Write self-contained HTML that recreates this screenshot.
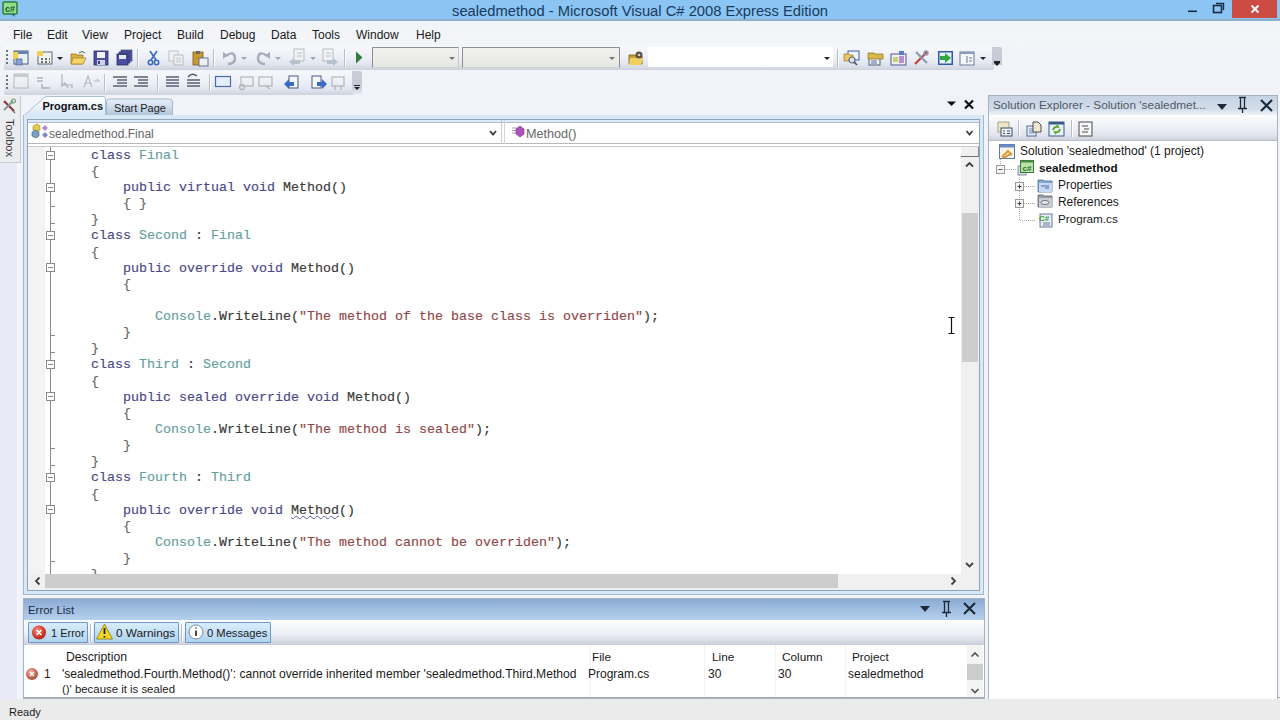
<!DOCTYPE html>
<html><head><meta charset="utf-8">
<style>
*{margin:0;padding:0;box-sizing:border-box}
html,body{width:1280px;height:720px;overflow:hidden;background:#F1F3F8;font-family:"Liberation Sans",sans-serif;position:relative}
.a{position:absolute}
.tx{position:absolute;white-space:nowrap;line-height:14px}
svg{position:absolute;overflow:visible}
#title{left:0;top:0;width:1280px;height:19px;background:#8AC5F3}
#titleline{left:0;top:19px;width:1280px;height:2px;background:#8FAECA}
#menubar{left:0;top:21px;width:1280px;height:25px;background:linear-gradient(#EEF5FC,#F3F4F8 6px,#F3F5F9)}
.menu{top:27.5px;font-size:12px;color:#1a1a1a}
.tb{background:linear-gradient(#F6F8FC,#EDF0F7 45%,#E2E6EF 75%,#CDD2DE);border-radius:2px}
.sep{position:absolute;width:1px;background:#B8BDCA;box-shadow:1px 0 0 #fff}
.dd{position:absolute;width:0;height:0;border-left:3px solid transparent;border-right:3px solid transparent;border-top:3px solid #222}
.grip{position:absolute;width:2px;background:repeating-linear-gradient(#6D7585 0 2px,transparent 2px 4px)}
#toolbox{left:0;top:96px;width:21px;height:67px;background:#ECEDF1;border-right:1px solid #C4C9D4;border-bottom:1px solid #C4C9D4}
#docframe{left:23px;top:115px;width:961px;height:480px;background:#D8E8F5;border:1px solid #A2B9CE}
#docinner{left:27px;top:119px;width:953px;height:472px;background:#fff;border:1px solid #8FA5B9}
#nav{left:28px;top:120px;width:951px;height:24px;background:linear-gradient(#DCEBF7 2px,#B4BCC6 2px,#B4BCC6 3px,#fff 3px);border-bottom:1px solid #B8B8B8}
#navline{left:28px;top:146px;width:951px;height:1px;background:#C8C8C8}
#code{left:28px;top:147px;width:933px;height:427px;background:#fff;overflow:hidden}
#vscroll{left:961px;top:147px;width:18px;height:427px;background:#F0F0F0}
#vthumb{left:962px;top:213px;width:16px;height:149px;background:#CDCDCD}
#hscroll{left:28px;top:574px;width:951px;height:16px;background:#F0F0F0}
#hthumb{left:45px;top:574px;width:793px;height:14px;background:#CDCDCD}
#errframe{left:23px;top:598px;width:962px;height:101px;background:#fff;border:1px solid #A7B3C2}
#errtitle{left:24px;top:599px;width:960px;height:21px;background:linear-gradient(#8BABD3,#A5C2E4 60%,#B5D0EC)}
#errtb{left:24px;top:620px;width:960px;height:25px;background:linear-gradient(#FCFDFE,#EEF0F6 55%,#DCDFE9 80%,#C8CDD9)}
#errlist{left:24px;top:645px;width:960px;height:53px;background:#fff;border-bottom:1px solid #A0A0A0}
#se{left:988px;top:95px;width:290px;height:604px;background:#fff;border:1px solid #A7B3C2;border-bottom:none}
#setitle{left:989px;top:96px;width:288px;height:19px;background:linear-gradient(#C6D3E3,#D2DDEA 70%,#E2E9F2 85%,#F0F3F8)}
#setb{left:989px;top:115px;width:288px;height:26px;background:linear-gradient(#FCFDFE,#F0F1F7 45%,#E3E5EE 80%,#CDD1DC);border-bottom:1px solid #B9BEC9}
#status{left:0;top:699px;width:1280px;height:21px;background:#EBEBEB}
#gut{position:absolute;left:0;top:0;width:17px;height:428px;background:#F3F3F3}
#oline{position:absolute;left:22px;top:0;width:1px;height:428px;background:#8A8A8A}
.ob{position:absolute;left:18px;width:9px;height:9px;border:1px solid #8A8A8A;background:#fff}
.ob:after{content:"";position:absolute;left:1px;top:3px;width:5px;height:1px;background:#8A8A8A}
.ot{position:absolute;left:22px;width:5px;height:1px;background:#8A8A8A}
.u{text-decoration:underline wavy #5A5A9A;text-decoration-thickness:1px;text-underline-offset:1px}
.ln{position:absolute;left:31px;font-family:"Liberation Mono",monospace;font-size:13.33px;white-space:pre;color:#383838;line-height:16px;-webkit-text-stroke:0.15px currentColor}
.b{color:#666}
.k{color:#48488A}.t{color:#64A0A0}.s{color:#904848}
</style></head><body>
<!-- title bar -->
<div class="a" id="title"></div>
<div class="a" id="titleline"></div>
<div class="tx" style="left:452px;top:3px;font-size:14.75px;line-height:16px;color:#1B3A5C">sealedmethod - Microsoft Visual C# 2008 Express Edition</div>
<div class="a" style="left:1232px;top:0;width:45px;height:18px;background:#CC4B43"></div>
<svg style="left:0;top:0" width="1280" height="21">
 <rect x="3" y="2" width="14" height="12" rx="1" fill="#8FE08A" stroke="#2E7D3A" stroke-width="1.5"/>
 <path d="M14 14 L15 17 L11 14Z" fill="#2B5A9A"/>
 <text x="5" y="12" font-family="Liberation Sans" font-weight="bold" font-size="9" fill="#1E5028">c#</text>
 <rect x="1188" y="10.5" width="9" height="1.6" fill="#1A2B44"/>
 <rect x="1213.5" y="5.5" width="8" height="7" fill="none" stroke="#1A2B44" stroke-width="1.6"/>
 <path d="M1216 3.5 H1223.5 V10" fill="none" stroke="#1A2B44" stroke-width="1.4"/>
 <path d="M1251.5 5.5 L1258.5 12.5 M1258.5 5.5 L1251.5 12.5" stroke="#fff" stroke-width="1.8"/>
</svg>
<!-- menu -->
<div class="a" id="menubar"></div>
<div class="tx menu" style="left:13px">File</div>
<div class="tx menu" style="left:47px">Edit</div>
<div class="tx menu" style="left:82px">View</div>
<div class="tx menu" style="left:124px">Project</div>
<div class="tx menu" style="left:177px">Build</div>
<div class="tx menu" style="left:220px">Debug</div>
<div class="tx menu" style="left:271px">Data</div>
<div class="tx menu" style="left:312px">Tools</div>
<div class="tx menu" style="left:356px">Window</div>
<div class="tx menu" style="left:416px">Help</div>
<!-- TOOLBARS -->
<div class="a tb" style="left:4px;top:46px;width:990px;height:24px"></div>
<div class="a tb" style="left:4px;top:71px;width:350px;height:24px"></div>
<div class="a" style="left:992px;top:47px;width:10px;height:18px;background:linear-gradient(#CACEDA,#C4C8D5);border-radius:0 2px 0 0"></div>
<div class="a" style="left:352px;top:71px;width:10px;height:23px;background:linear-gradient(#C9CDD9,#C6CAD6 60%,#E2E4EE);border-radius:0 2px 2px 0"></div>
<div id="icons">
<div class="grip" style="left:6px;top:50px;height:14px"></div>
<div class="grip" style="left:6px;top:75px;height:14px"></div>
<div class="sep" style="left:137px;top:49px;height:18px"></div>
<div class="sep" style="left:213px;top:49px;height:18px"></div>
<div class="sep" style="left:344px;top:49px;height:18px"></div>
<div class="sep" style="left:837px;top:49px;height:18px"></div>
<div class="sep" style="left:104px;top:74px;height:17px"></div>
<div class="sep" style="left:157px;top:74px;height:17px"></div>
<div class="sep" style="left:209px;top:74px;height:17px"></div>
<div class="dd" style="left:57px;top:57px"></div>
<div class="dd" style="left:241px;top:57px;border-top-color:#9AA"></div>
<div class="dd" style="left:275px;top:57px;border-top-color:#9AA"></div>
<div class="dd" style="left:310px;top:57px;border-top-color:#9AA"></div>
<div class="dd" style="left:980px;top:57px"></div>
<div class="dd" style="left:994px;top:63px"></div>
<div class="a" style="left:994px;top:61px;width:6px;height:1.5px;background:#222"></div>
<div class="dd" style="left:354px;top:87px"></div>
<div class="a" style="left:354px;top:85px;width:6px;height:1px;background:#222"></div>
<!-- combos -->
<div class="a" style="left:372px;top:47px;width:87px;height:21px;background:linear-gradient(#F2F2F0,#E6E6E2);border:1px solid #8E8E8E;border-right-color:#C8C8C8;border-bottom-color:#D0D0D0"></div>
<div class="a" style="left:462px;top:47px;width:158px;height:21px;background:linear-gradient(#F2F2F0,#E6E6E2);border:1px solid #8E8E8E;border-right-color:#8E8E8E;border-bottom-color:#D0D0D0"></div>
<div class="dd" style="left:449px;top:57px;border-top-color:#777"></div>
<div class="dd" style="left:609px;top:57px;border-top-color:#777"></div>
<div class="a" style="left:648px;top:47px;width:185px;height:21px;background:#fff;border-bottom:1px solid #D8DBE4"></div>
<div class="dd" style="left:824px;top:57px"></div>
<svg style="left:0;top:44px" width="1010" height="52">
 <!-- toolbar1 icons (y offset 44) -->
 <g transform="translate(13,6)">
  <rect x="1" y="1" width="14" height="13" fill="#E8F0F8" stroke="#4A5C78"/>
  <rect x="1" y="1" width="14" height="3" fill="#6A84B0"/>
  <rect x="0" y="2" width="5" height="7" fill="#F0D050"/>
  <rect x="3" y="9" width="6" height="6" fill="#8AA0D0" stroke="#3A5080" stroke-width="0.6"/>
 </g>
 <g transform="translate(37,6)">
  <rect x="1" y="2" width="14" height="12" fill="#F2F2E6" stroke="#5A6A80"/>
  <rect x="0" y="1" width="6" height="5" fill="#F0D050"/>
  <path d="M4 9 h2 M8 9 h2 M12 9 h1 M4 12 h2 M8 12 h2 M12 12 h1" stroke="#3A4A60" stroke-width="1.5"/>
 </g>
 <g transform="translate(70,6)">
  <path d="M1 4 H6 L7 5 H13 V14 H1Z" fill="#D8B040" stroke="#9A7A20" stroke-width="0.8"/>
  <path d="M3 8 H16 L13 14 H1Z" fill="#F3D56A" stroke="#A88A2A" stroke-width="0.8"/>
  <path d="M9 3 Q12 0 15 3" fill="none" stroke="#4A6A30" stroke-width="1"/>
 </g>
 <g transform="translate(93,6)">
  <rect x="1" y="1" width="14" height="14" fill="#4A4E9E" stroke="#2A2E6A" stroke-width="0.8"/>
  <rect x="4" y="2" width="8" height="6" fill="#F0F0F8"/>
  <rect x="4" y="10" width="8" height="5" fill="#D0D4E8"/>
  <rect x="5" y="11" width="2" height="3" fill="#3A3E8A"/>
 </g>
 <g transform="translate(116,6)">
  <rect x="5" y="0" width="11" height="11" fill="#5A5EA8" stroke="#2A2E6A" stroke-width="0.6"/>
  <rect x="3" y="2" width="11" height="11" fill="#4E52A0" stroke="#2A2E6A" stroke-width="0.6"/>
  <rect x="1" y="4" width="11" height="11" fill="#4A4E9E" stroke="#2A2E6A" stroke-width="0.8"/>
  <rect x="3" y="5" width="7" height="4" fill="#E8E8F4"/>
 </g>
 <g transform="translate(146,6)" fill="none" stroke="#3A6AC0" stroke-width="1.6">
  <path d="M4 1 L10 10 M11 1 L5 10"/>
  <circle cx="4.5" cy="12.5" r="2.2"/><circle cx="10.5" cy="12.5" r="2.2"/>
 </g>
 <g transform="translate(168,6)" opacity="0.55">
  <rect x="1" y="1" width="9" height="10" fill="#F4F4F4" stroke="#9A9A9A"/>
  <rect x="6" y="5" width="9" height="10" fill="#F4F4F4" stroke="#9A9A9A"/>
  <path d="M8 8 h5 M8 10 h5 M8 12 h5" stroke="#B0B0B0"/>
 </g>
 <g transform="translate(192,6)">
  <rect x="1" y="2" width="10" height="13" fill="#C89A30" stroke="#7A5A18" stroke-width="0.8"/>
  <rect x="4" y="1" width="4" height="3" fill="#6A6A6A"/>
  <rect x="7" y="8" width="9" height="8" fill="#EEF0F6" stroke="#4A5A7A" stroke-width="0.8"/>
 </g>
<g transform="translate(0,-44)">
 <g fill="none" stroke="#A8ACB8" stroke-width="2.4">
  <path d="M226 56 Q234 50 235 58 Q235 64 228 64"/>
  <path d="M267 56 Q259 50 258 58 Q258 64 265 64"/>
 </g>
 <path d="M223 52 L228 55 L223 59Z" fill="#A8ACB8"/>
 <path d="M270 52 L265 55 L270 59Z" fill="#A8ACB8"/>
 <g opacity="0.5">
  <rect x="294" y="49" width="10" height="12" fill="#F4F4F4" stroke="#8A8A8A"/>
  <path d="M297 53 h5 M297 56 h5" stroke="#8A8A8A"/>
  <path d="M289 62 L294 58 V60 H300 V64 H294 V66Z" fill="#8A9AB0"/>
  <rect x="323" y="49" width="10" height="12" fill="#F4F4F4" stroke="#8A8A8A"/>
  <path d="M326 53 h5 M326 56 h5" stroke="#8A8A8A"/>
  <path d="M338 62 L333 58 V60 H327 V64 H333 V66Z" fill="#8A9AB0"/>
 </g>
 <path d="M356 51.5 L362.5 57.5 L356 63.5Z" fill="#357A3E"/>
</g>
 <g transform="translate(628,6)">
  <path d="M1 5 H7 L8 6 H14 V14 H1Z" fill="#C8A030" stroke="#7A5A18" stroke-width="0.8"/>
  <path d="M2 8 H15 L13 15 H1Z" fill="#F0D060"/>
  <circle cx="11" cy="5" r="3.5" fill="#5A5048"/>
  <circle cx="11" cy="5" r="1.3" fill="#E0D0A0"/>
 </g>
 <g transform="translate(843,6)">
  <rect x="5" y="1" width="11" height="9" fill="#F0F4FA" stroke="#3A5AA8"/>
  <path d="M1 4 H6 L7 5 H10 V11 H1Z" fill="#E8C860" stroke="#9A7A20" stroke-width="0.7"/>
  <circle cx="9" cy="10" r="3" fill="#DDE6F0" stroke="#5A6A80" stroke-width="1.2"/>
  <path d="M11 12 L14 15" stroke="#3A4A60" stroke-width="1.6"/>
 </g>
 <g transform="translate(867,6)">
  <rect x="2" y="7" width="11" height="8" fill="#F2F4F8" stroke="#4A5A80"/>
  <path d="M1 3 H7 L8 4 H16 V9 H1Z" fill="#D8B848" stroke="#8A7020" stroke-width="0.7"/>
  <path d="M4 11 h6 M4 13 h6" stroke="#5A6A90"/>
 </g>
 <g transform="translate(890,6)">
  <rect x="1" y="4" width="15" height="11" fill="#EEF0F6" stroke="#4A5A90"/>
  <rect x="3" y="7" width="5" height="5" fill="#C8D070"/>
  <rect x="9" y="6" width="5" height="7" fill="#B890D0"/>
  <rect x="9" y="1" width="5" height="4" fill="#5A7AC8"/>
 </g>
 <g transform="translate(913,6)" stroke-width="2.2" fill="none">
  <path d="M2 14 L14 2" stroke="#C83A3A"/>
  <path d="M3 2 L14 13" stroke="#8A9AB0"/>
  <circle cx="13" cy="3" r="2" stroke="#8A9AB0" stroke-width="1.4"/>
 </g>
 <g transform="translate(937,6)">
  <rect x="1" y="1" width="15" height="14" fill="#2E5AA8"/>
  <rect x="2.5" y="2.5" width="12" height="11" fill="#E8F0FA"/>
  <path d="M3 6 H8 V3 L14 8 L8 13 V10 H3Z" fill="#2EA83A"/>
 </g>
 <g transform="translate(959,6)">
  <rect x="1" y="2" width="14" height="13" fill="#F4F6FA" stroke="#6A7A98"/>
  <rect x="1" y="2" width="14" height="2" fill="#8A9AC0"/>
  <path d="M8 6 V13 M10 8 h3 M10 11 h3" stroke="#6A7A98"/>
 </g>
 <!-- toolbar2 icons -->
 <g opacity="0.45">
  <rect x="14" y="30" width="14" height="14" fill="#F0F0F0" stroke="#7A7A7A"/>
  <rect x="14" y="30" width="14" height="3" fill="#9A9A9A"/>
  <path d="M37 34 h6 M37 37 h6 M42 40 v4 h8" stroke="#6A6A6A" stroke-width="1.4" fill="none"/>
  <path d="M62 30 L62 42 L65 39 L68 44 M64 41 h8 v3" stroke="#6A6A6A" stroke-width="1.2" fill="none"/>
  <path d="M84 43 L88 32 L92 43 M86 39 h4 M94 37 h5 L97 35" stroke="#7A7A7A" stroke-width="1.2" fill="none"/>
 </g>
 <g stroke="#5A6070" stroke-width="1.6">
  <path d="M113 33 h14 M117 36 h10 M117 39 h10 M113 42 h14"/>
  <path d="M134 33 h14 M138 36 h10 M138 39 h10 M134 42 h14"/>
  <path d="M166 33 h13 M166 36 h13 M166 39 h13 M166 42 h13"/>
  <path d="M187 36 h13 M187 39 h13 M187 42 h13"/>
 </g>
 <path d="M188 33 Q192 28 197 32" fill="none" stroke="#5A6070" stroke-width="1.6"/>
 <rect x="215.5" y="32.5" width="15" height="10" fill="#E4EEFA" stroke="#4A6AA8" stroke-width="1.2"/>
 <g opacity="0.45" fill="none" stroke="#7A7A7A" stroke-width="1.3">
  <rect x="241" y="33" width="12" height="9"/><circle cx="242" cy="43" r="2.5"/>
  <rect x="259" y="33" width="13" height="9"/><path d="M266 42 L270 45"/>
  <rect x="332" y="33" width="12" height="9"/><path d="M335 42 V46 M341 42 V46"/>
 </g>
 <g>
  <rect x="289" y="32" width="9" height="12" fill="#F4F6FA" stroke="#4A5A80"/>
  <path d="M284 40 L289 35 V38 H294 V42 H289 V45Z" fill="#3A6AC8"/>
  <rect x="312" y="32" width="9" height="12" fill="#F4F6FA" stroke="#4A5A80"/>
  <path d="M327 40 L322 35 V38 H317 V42 H322 V45Z" fill="#3A6AC8"/>
 </g>
</svg>
</div>
<!-- toolbox -->
<div class="a" style="left:0;top:163px;width:17px;height:536px;background:#E8EAF8"></div>
<div class="a" style="left:17px;top:163px;width:6px;height:536px;background:linear-gradient(90deg,#F6F6FC,#EEF2FA)"></div>
<div class="a" id="toolbox"></div>
<svg style="left:0;top:96px" width="21" height="22">
 <path d="M4 5 L14 15" stroke="#8A3A3A" stroke-width="2.2"/>
 <path d="M4 14 L13 5" stroke="#8A9098" stroke-width="1.8"/>
 <circle cx="13.5" cy="5" r="2" fill="none" stroke="#6AA06A" stroke-width="1.2"/>
 <path d="M13 15 L15 17" stroke="#6A7078" stroke-width="1.5"/>
</svg>
<div class="tx" style="left:3px;top:119px;font-size:11px;color:#3A3A3A;transform-origin:0 0;transform:translate(14px,0) rotate(90deg)">Toolbox</div>
<!-- document well -->
<div class="a" id="docframe"></div>
<div class="a" id="docinner"></div>
<div class="a" id="nav"></div>
<div class="a" id="navline"></div>
<div id="tabs">
<svg style="left:0;top:90px" width="990" height="30">
 <defs>
  <linearGradient id="gAct" x1="0" y1="0" x2="0" y2="1"><stop offset="0" stop-color="#FFFFFF"/><stop offset="1" stop-color="#D6E6F6"/></linearGradient>
  <linearGradient id="gInact" x1="0" y1="0" x2="0" y2="1"><stop offset="0" stop-color="#E8EFF7"/><stop offset="0.5" stop-color="#CCDBEA"/><stop offset="1" stop-color="#AFC5DB"/></linearGradient>
 </defs>
 <path d="M106.5 25.5 V11.5 Q106.5 9 109 9 H169 Q172.5 9 172.5 12 V25.5Z" fill="url(#gInact)" stroke="#A6B8CB"/>
 <path d="M23.5 26 L45 7 Q46 6.5 48 6.5 H103 Q105.5 6.5 105.5 9 V25.5 H983.5" fill="url(#gAct)" stroke="#A9BFD4"/>
 <rect x="24" y="25" width="959" height="2" fill="#D8E8F5"/>
</svg>
<div class="tx" style="left:42.5px;top:98.8px;font-size:11px;font-weight:bold;color:#111">Program.cs</div>
<div class="tx" style="left:114px;top:101px;font-size:11px;color:#1c1c1c">Start Page</div>
<svg style="left:940px;top:96px" width="40" height="20">
 <path d="M7 5.5 H16 L11.5 10Z" fill="#111"/>
 <path d="M25 4.5 L33 12.5 M33 4.5 L25 12.5" stroke="#111" stroke-width="2.2"/>
</svg>
</div>
<!-- nav bar -->
<div class="a" style="left:501px;top:120px;width:1px;height:24px;background:#C8C8C8"></div>
<div class="a" style="left:504px;top:120px;width:1px;height:24px;background:#D4D4D4"></div>
<svg style="left:28px;top:120px" width="951" height="24">
 <path d="M5 6 L9 4 L12 6 V10 L9 12 L5 10Z" fill="#E8C84A" stroke="#A08A2A" stroke-width="0.6"/>
 <path d="M4 12 L8 10 L11 12 V16 L8 18 L4 16Z" fill="#7AA0C8" stroke="#3A5A80" stroke-width="0.6"/>
 <path d="M14 8 L17 5 L20 8 L17 11Z" fill="#B58AD8"/>
 <path d="M14 15 L17 12 L20 15 L17 18Z" fill="#7A8CC8"/>
 <path d="M462 11 L465 14.5 L468 11" fill="none" stroke="#404040" stroke-width="1.9"/>
 <path d="M484 8 H489 M484 10.5 H489 M484 13 H489" stroke="#8A8AA8" stroke-width="0.8"/>
 <path d="M488 9 L492 6 L496 9 V14 L492 17 L488 14Z" fill="#B050C0" stroke="#7A2E8A" stroke-width="0.6"/>
 <path d="M938.5 11 L941.5 14.5 L944.5 11" fill="none" stroke="#404040" stroke-width="1.9"/>
</svg>
<div class="tx" style="left:49px;top:126.7px;font-size:12px;color:#666">sealedmethod.Final</div>
<div class="tx" style="left:526px;top:126.5px;font-size:12.6px;color:#666">Method()</div>
<div class="a" id="code"><div id="gut"></div><div id="oline"></div>
<div class="ln" style="top:0.80px">    <span class="k">class</span> <span class="t">Final</span></div>
<div class="ob" style="top:3.50px"></div>
<div class="ln" style="top:16.93px">    <span class="b">{</span></div>
<div class="ln" style="top:33.06px">        <span class="k">public</span> <span class="k">virtual</span> <span class="k">void</span> Method()</div>
<div class="ob" style="top:35.80px"></div>
<div class="ln" style="top:49.19px">        <span class="b">{</span> <span class="b">}</span></div>
<div class="ot" style="top:59.40px"></div>
<div class="ln" style="top:65.32px">    <span class="b">}</span></div>
<div class="ot" style="top:75.50px"></div>
<div class="ln" style="top:81.45px">    <span class="k">class</span> <span class="t">Second</span> : <span class="t">Final</span></div>
<div class="ob" style="top:84.10px"></div>
<div class="ln" style="top:97.58px">    <span class="b">{</span></div>
<div class="ln" style="top:113.71px">        <span class="k">public</span> <span class="k">override</span> <span class="k">void</span> Method()</div>
<div class="ob" style="top:116.40px"></div>
<div class="ln" style="top:129.84px">        <span class="b">{</span></div>
<div class="ln" style="top:145.97px"></div>
<div class="ln" style="top:162.10px">            <span class="t">Console</span>.WriteLine(<span class="s">"The method of the base class is overriden"</span>);</div>
<div class="ln" style="top:178.23px">        <span class="b">}</span></div>
<div class="ot" style="top:188.40px"></div>
<div class="ln" style="top:194.36px">    <span class="b">}</span></div>
<div class="ot" style="top:204.60px"></div>
<div class="ln" style="top:210.49px">    <span class="k">class</span> <span class="t">Third</span> : <span class="t">Second</span></div>
<div class="ob" style="top:213.20px"></div>
<div class="ln" style="top:226.62px">    <span class="b">{</span></div>
<div class="ln" style="top:242.75px">        <span class="k">public</span> <span class="k">sealed</span> <span class="k">override</span> <span class="k">void</span> Method()</div>
<div class="ob" style="top:245.40px"></div>
<div class="ln" style="top:258.88px">        <span class="b">{</span></div>
<div class="ln" style="top:275.01px">            <span class="t">Console</span>.WriteLine(<span class="s">"The method is sealed"</span>);</div>
<div class="ln" style="top:291.14px">        <span class="b">}</span></div>
<div class="ot" style="top:301.30px"></div>
<div class="ln" style="top:307.27px">    <span class="b">}</span></div>
<div class="ot" style="top:317.50px"></div>
<div class="ln" style="top:323.40px">    <span class="k">class</span> <span class="t">Fourth</span> : <span class="t">Third</span></div>
<div class="ob" style="top:326.10px"></div>
<div class="ln" style="top:339.53px">    <span class="b">{</span></div>
<div class="ln" style="top:355.66px">        <span class="k">public</span> <span class="k">override</span> <span class="k">void</span> <span class="u">Method</span>()</div>
<div class="ob" style="top:358.40px"></div>
<div class="ln" style="top:371.79px">        <span class="b">{</span></div>
<div class="ln" style="top:387.92px">            <span class="t">Console</span>.WriteLine(<span class="s">"The method cannot be overriden"</span>);</div>
<div class="ln" style="top:404.05px">        <span class="b">}</span></div>
<div class="ot" style="top:414.20px"></div>
<div class="ln" style="top:420.18px">    <span class="b">}</span></div>
<div class="ot" style="top:430.40px"></div>
</div>
<div class="a" id="vscroll"></div>
<div class="a" id="vthumb"></div>
<div class="a" id="hscroll"></div>
<div class="a" id="hthumb"></div>
<div class="a" style="left:961px;top:147px;width:18px;height:10px;background:#F0F0F0;border-bottom:1px solid #6E6E6E;border-right:1px solid #7A8896"></div>
<svg style="left:28px;top:146px" width="951" height="445">
 <path d="M938 20.5 L941.5 17 L945 20.5" fill="none" stroke="#404040" stroke-width="1.8"/>
 <path d="M938 417 L941.5 420.5 L945 417" fill="none" stroke="#404040" stroke-width="1.8"/>
 <path d="M11.5 431.5 L8 435 L11.5 438.5" fill="none" stroke="#404040" stroke-width="1.8"/>
 <path d="M923.5 431.5 L927 435 L923.5 438.5" fill="none" stroke="#404040" stroke-width="1.8"/>
</svg>
<svg style="left:940px;top:310px" width="20" height="30">
 <path d="M8.5 7.5 H14.5 M8.5 23.5 H14.5 M11.5 8 V23" stroke="#111" stroke-width="1.2"/>
</svg>
<!-- error list -->
<div class="a" id="errframe"></div>
<div class="a" id="errtitle"></div>
<div class="a" id="errtb"></div>
<div class="a" id="errlist"></div>
<div id="errc">
<div class="tx" style="left:28px;top:603px;font-size:11.4px;color:#1B2B40">Error List</div>
<svg style="left:900px;top:598px" width="90" height="22">
 <path d="M20 8 H30 L25 14Z" fill="#1E2A3A"/>
 <path d="M44.5 4 V14 M48.5 4 V14 M43 3.5 H50 M42 14.5 H51 M46.5 14.5 V19" stroke="#1E2A3A" stroke-width="1.3" fill="none"/>
 <path d="M64 5 L75 16 M75 5 L64 16" stroke="#1E2A3A" stroke-width="2.2"/>
</svg>
<div class="a" style="left:28px;top:622px;width:60px;height:21px;background:linear-gradient(#DAEEFB,#C3E0F5 50%,#B0D4F0);border:1px solid #6E96C6;border-radius:1px"></div>
<div class="a" style="left:94px;top:622px;width:85px;height:21px;background:linear-gradient(#DAEEFB,#C3E0F5 50%,#B0D4F0);border:1px solid #6E96C6;border-radius:1px"></div>
<div class="a" style="left:185px;top:622px;width:86px;height:21px;background:linear-gradient(#DAEEFB,#C3E0F5 50%,#B0D4F0);border:1px solid #6E96C6;border-radius:1px"></div>
<div class="sep" style="left:90px;top:624px;height:17px"></div>
<div class="sep" style="left:181px;top:624px;height:17px"></div>
<svg style="left:0;top:620px" width="300" height="80">
 <defs>
  <radialGradient id="gErr" cx="0.4" cy="0.35" r="0.7"><stop offset="0" stop-color="#F89A8A"/><stop offset="0.6" stop-color="#D83A2A"/><stop offset="1" stop-color="#A82A1A"/></radialGradient>
  <radialGradient id="gErr2" cx="0.4" cy="0.35" r="0.7"><stop offset="0" stop-color="#F0B8A8"/><stop offset="0.6" stop-color="#C86A5A"/><stop offset="1" stop-color="#A04A3A"/></radialGradient>
 </defs>
 <circle cx="39" cy="12.5" r="7" fill="url(#gErr)"/>
 <path d="M36.5 10 L41.5 15 M41.5 10 L36.5 15" stroke="#fff" stroke-width="1.6"/>
 <path d="M104.5 4 L112.5 19 H96.5Z" fill="#F4D820" stroke="#8A7A10" stroke-width="0.8"/>
 <path d="M104.5 8 V14 M104.5 16 V17.5" stroke="#222" stroke-width="1.8"/>
 <circle cx="196" cy="12" r="7" fill="#fff" stroke="#7A8A9A" stroke-width="1"/>
 <path d="M196 10.5 V16 M196 7.5 V8.5" stroke="#333" stroke-width="1.8"/>
 <circle cx="32" cy="54" r="6" fill="url(#gErr2)"/>
 <path d="M30 52 L34 56 M34 52 L30 56" stroke="#fff" stroke-width="1.2"/>
</svg>
<div class="tx" style="left:51px;top:626px;font-size:11px;color:#1a1a1a">1 Error</div>
<div class="tx" style="left:116px;top:626px;font-size:11.8px;color:#1a1a1a">0 Warnings</div>
<div class="tx" style="left:207px;top:626px;font-size:11.2px;color:#1a1a1a">0 Messages</div>
<div class="a" style="left:590px;top:645px;width:1px;height:53px;background:#F2F2F2"></div>
<div class="a" style="left:704px;top:645px;width:1px;height:53px;background:#F2F2F2"></div>
<div class="a" style="left:775px;top:645px;width:1px;height:53px;background:#F2F2F2"></div>
<div class="a" style="left:845px;top:645px;width:1px;height:53px;background:#F2F2F2"></div>
<div class="tx" style="left:66px;top:649.5px;font-size:12.2px;color:#1a1a1a">Description</div>
<div class="tx" style="left:592px;top:650px;font-size:11.8px;color:#1a1a1a">File</div>
<div class="tx" style="left:712px;top:650px;font-size:11.8px;color:#1a1a1a">Line</div>
<div class="tx" style="left:782px;top:650px;font-size:11.8px;color:#1a1a1a">Column</div>
<div class="tx" style="left:852px;top:650px;font-size:11.8px;color:#1a1a1a">Project</div>
<div class="tx" style="left:44px;top:667px;font-size:12px;color:#1a1a1a">1</div>
<div class="tx" style="left:62px;top:667px;font-size:12.1px;color:#1a1a1a">'sealedmethod.Fourth.Method()': cannot override inherited member 'sealedmethod.Third.Method</div>
<div class="tx" style="left:62px;top:681.5px;font-size:11.4px;color:#1a1a1a">()' because it is sealed</div>
<div class="tx" style="left:588px;top:667px;font-size:12px;color:#1a1a1a">Program.cs</div>
<div class="tx" style="left:708px;top:667px;font-size:12px;color:#1a1a1a">30</div>
<div class="tx" style="left:778px;top:667px;font-size:12px;color:#1a1a1a">30</div>
<div class="tx" style="left:848px;top:667px;font-size:12px;color:#1a1a1a">sealedmethod</div>
<div class="a" style="left:967px;top:645px;width:16px;height:53px;background:#F4F4F4"></div>
<div class="a" style="left:24px;top:697px;width:960px;height:1px;background:#A8A8A8"></div>
<div class="a" style="left:988px;top:697px;width:292px;height:1px;background:#A8A8A8"></div>
<div class="a" style="left:967px;top:664px;width:16px;height:16px;background:#CDCDCD"></div>
<svg style="left:966px;top:645px" width="18" height="53">
 <path d="M5.5 11.5 L9 8 L12.5 11.5" fill="none" stroke="#555" stroke-width="1.7"/>
 <path d="M5.5 44 L9 47.5 L12.5 44" fill="none" stroke="#555" stroke-width="1.7"/>
</svg>
</div>
<!-- solution explorer -->
<div class="a" id="se"></div>
<div class="a" id="setitle"></div>
<div class="a" id="setb"></div>
<div id="sec">
<div class="tx" style="left:993px;top:98.3px;font-size:11.8px;color:#4E5966">Solution Explorer - Solution 'sealedmet...</div>
<div class="sep" style="left:1018px;top:120px;height:17px"></div>
<div class="sep" style="left:1071px;top:120px;height:17px"></div>
<svg style="left:980px;top:90px" width="300" height="150">
 <path d="M237 14 H247 L242 20Z" fill="#1E2A3A"/>
 <path d="M281 10 L292 21 M292 10 L281 21" stroke="#1E2A3A" stroke-width="2.2"/>
 <path d="M260.5 8 V18 M264.5 8 V18 M259 7.5 H266 M258 18.5 H267 M262.5 18.5 V23" stroke="#1E2A3A" stroke-width="1.3" fill="none"/>
 <!-- se toolbar icons -->
 <g transform="translate(17,31)">
  <rect x="1" y="1" width="11" height="10" fill="#EEE8C8" stroke="#9A9070" stroke-width="0.8"/>
  <rect x="4" y="7" width="11" height="8" fill="#F2F4F8" stroke="#3A4A6A"/>
  <path d="M6 10 h2 M10 10 h3 M6 12.5 h2 M10 12.5 h3" stroke="#3A4A6A"/>
 </g>
 <g transform="translate(46,31)">
  <rect x="1" y="5" width="9" height="10" fill="#E8EEF8" stroke="#4A6A9A"/>
  <path d="M3 8 h5 M3 10 h5 M3 12 h5" stroke="#6A8AC0"/>
  <path d="M7 1 H12 L15 4 V11 H7Z" fill="#F0E8D0" stroke="#3A3A3A" stroke-width="0.9"/>
 </g>
 <g transform="translate(68,31)">
  <rect x="1" y="1" width="15" height="14" fill="#E8F0F8" stroke="#3A5A8A"/>
  <rect x="1" y="1" width="15" height="2.5" fill="#3A5A8A"/>
  <path d="M5 9 Q6 5 10 6 L9 4 M12 8 Q11 12 7 11 L8 13" fill="none" stroke="#5AA82A" stroke-width="1.8"/>
 </g>
 <g transform="translate(98,31)">
  <rect x="1" y="1" width="13" height="14" fill="#F6F6F6" stroke="#4A4A4A"/>
  <path d="M4 5 h6 M6 8 h5 M4 11 h6" stroke="#4A4A4A"/>
 </g>
 <!-- tree icons -->
 <g transform="translate(19,54)">
  <rect x="0.5" y="0.5" width="15" height="14" fill="#F8F4E8" stroke="#5A7AA8"/>
  <rect x="0.5" y="0.5" width="15" height="3" fill="#6A8AC8"/>
  <path d="M3 13 L9 7 L13 11" fill="none" stroke="#E0A030" stroke-width="2.2"/>
  <path d="M4 14 L12 10" stroke="#C88A30" stroke-width="1.5"/>
 </g>
 <path d="M20.5 69 V75 M25 79.5 H37" stroke="#A8A8A8" stroke-dasharray="1 1"/>
 <rect x="16.5" y="75.5" width="8" height="8" fill="#F4F4F4" stroke="#9A9A9A"/>
 <path d="M18.5 79.5 h4" stroke="#555"/>
 <g transform="translate(38,70)">
  <rect x="0" y="6" width="8" height="9" fill="#D8E0EA" stroke="#6A7A8A" stroke-width="0.8"/>
  <rect x="2.5" y="0.5" width="13" height="12" fill="#B8E4A8" stroke="#3A7A3A"/>
  <rect x="2.5" y="0.5" width="13" height="2" fill="#4A8A4A"/>
  <text x="4.5" y="10.5" font-family="Liberation Sans" font-weight="bold" font-size="8" fill="#2A6A2A">c#</text>
 </g>
 <path d="M39.5 85 V131 M44 96.5 H56 M44 113.5 H56 M40 130.5 H56" stroke="#A8A8A8" stroke-dasharray="1 1"/>
 <rect x="35.5" y="92.5" width="8" height="8" fill="#F4F4F4" stroke="#9A9A9A"/>
 <path d="M37.5 96.5 h4 M39.5 94.5 v4" stroke="#444"/>
 <rect x="35.5" y="109.5" width="8" height="8" fill="#F4F4F4" stroke="#9A9A9A"/>
 <path d="M37.5 113.5 h4 M39.5 111.5 v4" stroke="#444"/>
 <g transform="translate(57,88)">
  <path d="M1 2 H6 L7 3 H15 V14 H1Z" fill="#8AA8D8" stroke="#4A6A98" stroke-width="0.8"/>
  <rect x="2" y="5" width="13" height="9" fill="#C8D8F0"/>
  <path d="M4 8 h8 M8 10 h4" stroke="#4A6AA8" stroke-width="1.2"/>
 </g>
 <g transform="translate(57,103)">
  <path d="M1 2 H6 L7 3 H15 V14 H1Z" fill="#9AA0A8" stroke="#5A6068" stroke-width="0.8"/>
  <rect x="2" y="5" width="13" height="9" fill="#C8CCD2"/>
  <ellipse cx="8" cy="9.5" rx="4" ry="2" fill="#E8ECF0" stroke="#5A6068" stroke-width="0.8"/>
 </g>
 <g transform="translate(58,121)">
  <rect x="2" y="3" width="12" height="13" fill="#E8EEF8" stroke="#4A5A7A" stroke-width="0.8"/>
  <path d="M5 12 h7 M5 14 h7" stroke="#6A7A9A"/>
  <text x="1" y="10" font-family="Liberation Sans" font-weight="bold" font-size="8" fill="#3A9A3A">C#</text>
 </g>
</svg>
<div class="tx" style="left:1020px;top:144px;font-size:12px;color:#1a1a1a">Solution 'sealedmethod' (1 project)</div>
<div class="tx" style="left:1039px;top:160.5px;font-size:11.7px;font-weight:bold;color:#111">sealedmethod</div>
<div class="tx" style="left:1058px;top:178.3px;font-size:11.9px;color:#1a1a1a">Properties</div>
<div class="tx" style="left:1058px;top:195.3px;font-size:11.9px;color:#1a1a1a">References</div>
<div class="tx" style="left:1058px;top:212.3px;font-size:11.7px;color:#1a1a1a">Program.cs</div>
</div>
<!-- status -->
<div class="a" id="status"></div>
<div class="tx" style="left:9px;top:704.5px;font-size:11px;color:#1a1a1a">Ready</div>
</body></html>
